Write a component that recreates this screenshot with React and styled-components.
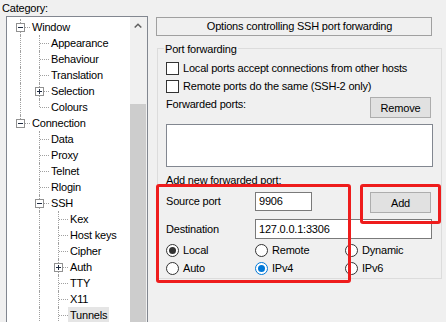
import React from "react";
import styled, { createGlobalStyle } from "styled-components";

const GlobalStyle = createGlobalStyle`
  html, body {
    margin: 0;
    padding: 0;
    background: #f0f0f0;
  }
  body {
    font-family: "Liberation Sans", Arial, sans-serif;
    font-size: 11px;
    letter-spacing: -0.2px;
    color: #000;
  }
`;

const Dialog = styled.div`
  position: relative;
  width: 446px;
  height: 322px;
  overflow: hidden;
  display: flex;
  background: #f0f0f0;
`;

/* ---------- left: category tree ---------- */

const LeftPane = styled.div`
  width: 156px;
  flex: none;
  padding: 1px 0 0 2px;
  box-sizing: border-box;
`;

const PaneLabel = styled.div`
  height: 14px;
  line-height: 14px;
`;

const TreeBox = styled.div`
  margin: 1px 0 0 4px;
  width: 142px;
  height: 330px;
  box-sizing: border-box;
  border: 1px solid #828790;
  background: #fff;
  display: flex;
`;

const TreeList = styled.div`
  flex: 1;
  padding: 2px 0 0 4px;
`;

const TreeRow = styled.div`
  display: flex;
  height: 16px;
  white-space: nowrap;
`;

const Guide = styled.span`
  position: relative;
  flex: none;
  width: 19px;
  height: 16px;

  &::before {
    content: "";
    position: absolute;
    left: 9px;
    top: 0;
    display: ${({ $v }) => ($v === "none" ? "none" : "block")};
    height: ${({ $v }) => ($v === "top" ? "8px" : "16px")};
    border-left: 1px dotted #a0a0a0;
  }

  &::after {
    content: "";
    position: absolute;
    left: 10px;
    top: 8px;
    width: 9px;
    display: ${({ $h }) => ($h ? "block" : "none")};
    border-top: 1px dotted #a0a0a0;
  }
`;

const Expander = styled.span`
  position: absolute;
  left: 5px;
  top: 4px;
  width: 9px;
  height: 9px;
  box-sizing: border-box;
  border: 1px solid #919191;
  background: #fff;
  z-index: 1;

  &::before {
    content: "";
    position: absolute;
    left: 1px;
    top: 3px;
    width: 5px;
    height: 1px;
    background: #1e2a40;
  }

  &::after {
    content: "";
    position: absolute;
    left: 3px;
    top: 1px;
    width: 1px;
    height: 5px;
    background: #1e2a40;
    display: ${({ $open }) => ($open ? "none" : "block")};
  }
`;

const NodeLabel = styled.span`
  padding: 0 2px;
  line-height: 16px;
  background: ${({ $selected }) => ($selected ? "#e5e5e5" : "transparent")};
`;

const ScrollBar = styled.div`
  width: 17px;
  flex: none;
  background: #f0f0f0;
  display: flex;
  flex-direction: column;
`;

const ScrollArrow = styled.div`
  height: 17px;
  display: flex;
  align-items: center;
  justify-content: center;
  padding-right: 2px;
`;

const ScrollThumb = styled.div`
  flex: 1;
  margin: 70px 1px 0 0;
  background: #cdcdcd;
`;

/* ---------- right: tunnels panel ---------- */

const RightPane = styled.div`
  flex: 1;
  padding-top: 17px;
  display: flex;
  flex-direction: column;
`;

const Banner = styled.div`
  width: 276px;
  height: 19px;
  box-sizing: border-box;
  border: 1px solid #a0a0a0;
  line-height: 17px;
  text-align: center;
  padding-left: 11px;
`;

const GroupBox = styled.div`
  position: relative;
  margin: 12px 0 0 1px;
  width: 285px;
  box-sizing: border-box;
  border: 1px solid #dcdcdc;
  padding: 10px 8px 1px 8px;
`;

const GroupTitle = styled.span`
  position: absolute;
  top: -7px;
  left: 6px;
  padding: 0 1px;
  line-height: 14px;
  background: #f0f0f0;
`;

const CheckRow = styled.div`
  display: flex;
  align-items: center;
  gap: 4px;
  height: 18px;
`;

const CheckBox = styled.span`
  width: 13px;
  height: 13px;
  box-sizing: border-box;
  border: 1px solid #333;
  background: #fff;
  flex: none;
`;

const ForwardRow = styled.div`
  display: flex;
  justify-content: space-between;
  align-items: flex-start;
  width: 265px;
  margin-top: 2px;
`;

const FieldLabel = styled.span`
  line-height: ${({ $h }) => $h || 14}px;
`;

const PushButton = styled.button`
  width: 61px;
  height: 21px;
  padding: 0;
  box-sizing: border-box;
  border: 1px solid #adadad;
  background: #e1e1e1;
  font: inherit;
  letter-spacing: inherit;
  color: #000;
`;

const ListBox = styled.div`
  margin-top: 6px;
  width: 267px;
  height: 43px;
  box-sizing: border-box;
  border: 1px solid #828790;
  background: #fff;
`;

const SectionLabel = styled.div`
  margin-top: 6px;
  line-height: 14px;
`;

const FormRow = styled.div`
  display: grid;
  grid-template-columns: ${({ $cols }) => $cols};
  align-items: start;
  width: 265px;
  margin-top: ${({ $gap }) => $gap}px;
`;

const TextField = styled.div`
  height: ${({ $h }) => $h}px;
  box-sizing: border-box;
  border: 1px solid #7a7a7a;
  background: #fff;
  padding: 0 3px;
  line-height: ${({ $h }) => $h - 2}px;
`;

const RadioGrid = styled.div`
  display: grid;
  grid-template-columns: 89px 90px auto;
  grid-auto-rows: 18px;
  margin-top: 2px;
`;

const RadioOption = styled.label`
  display: flex;
  align-items: center;
  gap: 4px;
`;

const RadioDot = styled.span`
  position: relative;
  width: 13px;
  height: 13px;
  box-sizing: border-box;
  border-radius: 50%;
  border: 1px solid ${({ $focus }) => ($focus ? "#0078d7" : "#333")};
  background: #fff;
  flex: none;

  &::after {
    content: "";
    position: absolute;
    left: 2px;
    top: 2px;
    width: 7px;
    height: 7px;
    border-radius: 50%;
    background: ${({ $focus }) => ($focus ? "#0078d7" : "#333")};
    display: ${({ $checked }) => ($checked ? "block" : "none")};
  }
`;

const Annotation = styled.div`
  position: absolute;
  left: ${({ $x }) => $x}px;
  top: ${({ $y }) => $y}px;
  width: ${({ $w }) => $w}px;
  height: ${({ $h }) => $h}px;
  box-sizing: border-box;
  border: 3px solid #ee1c1c;
  border-radius: 3px;
  pointer-events: none;
`;

const nodes = [
  { label: "Window", guides: [], v: "full", exp: "open" },
  { label: "Appearance", guides: ["full"], v: "full" },
  { label: "Behaviour", guides: ["full"], v: "full" },
  { label: "Translation", guides: ["full"], v: "full" },
  { label: "Selection", guides: ["full"], v: "full", exp: "closed" },
  { label: "Colours", guides: ["full"], v: "top" },
  { label: "Connection", guides: [], v: "top", exp: "open" },
  { label: "Data", guides: ["none"], v: "full" },
  { label: "Proxy", guides: ["none"], v: "full" },
  { label: "Telnet", guides: ["none"], v: "full" },
  { label: "Rlogin", guides: ["none"], v: "full" },
  { label: "SSH", guides: ["none"], v: "full", exp: "open" },
  { label: "Kex", guides: ["none", "full"], v: "full" },
  { label: "Host keys", guides: ["none", "full"], v: "full" },
  { label: "Cipher", guides: ["none", "full"], v: "full" },
  { label: "Auth", guides: ["none", "full"], v: "full", exp: "closed" },
  { label: "TTY", guides: ["none", "full"], v: "full" },
  { label: "X11", guides: ["none", "full"], v: "full" },
  { label: "Tunnels", guides: ["none", "full"], v: "full", selected: true },
  { label: "Bugs", guides: ["none", "full"], v: "full" },
];

const radios = [
  { label: "Local", checked: true },
  { label: "Remote" },
  { label: "Dynamic" },
  { label: "Auto" },
  { label: "IPv4", checked: true, focus: true },
  { label: "IPv6" },
];

export default function App() {
  return (
    <>
      <GlobalStyle />
      <Dialog>
        <LeftPane>
          <PaneLabel>Category:</PaneLabel>
          <TreeBox>
            <TreeList>
              {nodes.map((n) => (
                <TreeRow key={n.label}>
                  {n.guides.map((g, i) => (
                    <Guide key={i} $v={g} />
                  ))}
                  <Guide $v={n.v} $h>
                    {n.exp && <Expander $open={n.exp === "open"} />}
                  </Guide>
                  <NodeLabel $selected={n.selected}>{n.label}</NodeLabel>
                </TreeRow>
              ))}
            </TreeList>
            <ScrollBar>
              <ScrollArrow>
                <svg width="8" height="5" viewBox="0 0 8 5">
                  <path
                    d="M0.7 4.5 L4 1.2 L7.3 4.5"
                    fill="none"
                    stroke="#606060"
                    strokeWidth="1.5"
                  />
                </svg>
              </ScrollArrow>
              <ScrollThumb />
            </ScrollBar>
          </TreeBox>
        </LeftPane>

        <RightPane>
          <Banner>Options controlling SSH port forwarding</Banner>
          <GroupBox>
            <GroupTitle>Port forwarding</GroupTitle>
            <CheckRow>
              <CheckBox />
              <span>Local ports accept connections from other hosts</span>
            </CheckRow>
            <CheckRow>
              <CheckBox />
              <span>Remote ports do the same (SSH-2 only)</span>
            </CheckRow>
            <ForwardRow>
              <FieldLabel>Forwarded ports:</FieldLabel>
              <PushButton>Remove</PushButton>
            </ForwardRow>
            <ListBox />
            <SectionLabel>Add new forwarded port:</SectionLabel>
            <FormRow $cols="89px 57px 1fr 61px" $gap={5}>
              <FieldLabel $h={19}>Source port</FieldLabel>
              <TextField $h={19}>9906</TextField>
              <span />
              <PushButton>Add</PushButton>
            </FormRow>
            <FormRow $cols="89px 177px" $gap={6}>
              <FieldLabel $h={20}>Destination</FieldLabel>
              <TextField $h={20}>127.0.0.1:3306</TextField>
            </FormRow>
            <RadioGrid>
              {radios.map((r) => (
                <RadioOption key={r.label}>
                  <RadioDot $checked={r.checked} $focus={r.focus} />
                  {r.label}
                </RadioOption>
              ))}
            </RadioGrid>
          </GroupBox>
        </RightPane>

        <Annotation $x={156} $y={184} $w={195} $h={99} />
        <Annotation $x={360} $y={184} $w={81} $h={40} />
      </Dialog>
    </>
  );
}
